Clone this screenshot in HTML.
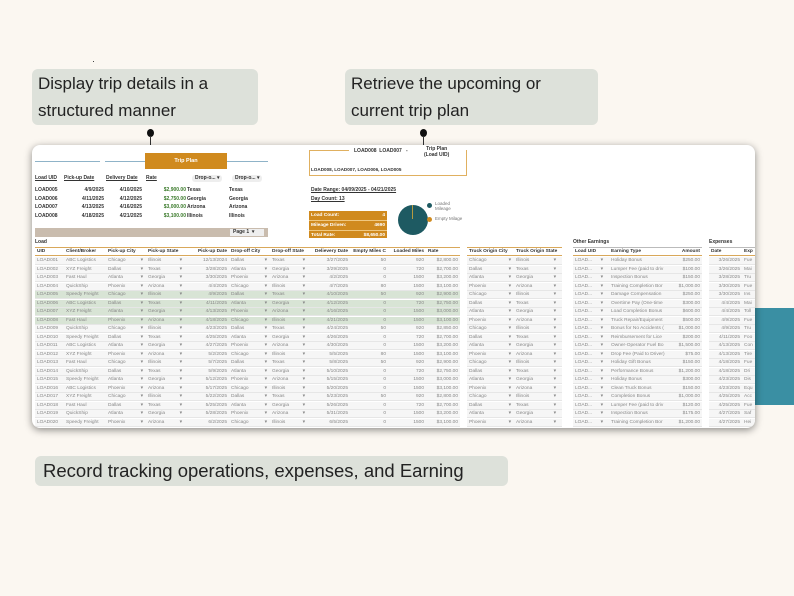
<!DOCTYPE html>
<html><head><meta charset="utf-8"><style>
*{margin:0;padding:0;box-sizing:border-box}
body{width:794px;height:596px;background:#fbf7f1;position:relative;overflow:hidden;font-family:"Liberation Sans",sans-serif}
.call{position:absolute;background:#dde1da;border-radius:6px;color:#222;font-size:17px;line-height:27px;padding:1px 6px;white-space:nowrap}
.dot{position:absolute;width:7px;height:8px;border-radius:50%;background:#111}
.vl{position:absolute;width:1px;background:#333}
.panel{position:absolute;left:32px;top:145px;width:723px;height:283px;background:#fff;border-radius:8px;box-shadow:0 2px 8px rgba(0,0,0,.45);overflow:hidden}
.teal{position:absolute;left:755px;top:308px;width:39px;height:97px;background:#3a8fa3}
.a{position:absolute;font-size:5px;color:#333;white-space:nowrap;line-height:7px}
.b{font-weight:bold}
.r{position:absolute;left:0;width:723px;height:8.45px;font-size:4.8px;color:#888;line-height:8px}
.r span{position:absolute;top:0;height:8px;overflow:hidden;white-space:nowrap;border-bottom:1px solid #e6e6e6;background:#f6f6f6;padding:0 2px}
.h span{color:#333;font-weight:bold;background:#fff;border-bottom:1px solid #d9a85a}
.g span{background:#d8e4d5}
.c1{left:3px;width:29px}.c2{left:32px;width:42px}.c3{left:74px;width:40px}.c4{left:114px;width:42px}
.c5{left:156px;width:41px;text-align:right}.c6{left:197px;width:41px}.c7{left:238px;width:41px}
.c8{left:279px;width:39px;text-align:right}.c9{left:318px;width:38px;text-align:right}.c10{left:356px;width:38px;text-align:right}.c11{left:394px;width:34px;text-align:right}
.c12{left:435px;width:47px}.c13{left:482px;width:48px}
.c14{left:541px;width:36px}.c15{left:577px;width:59px}.c16{left:636px;width:34px;text-align:right}
.c17{left:677px;width:33px;text-align:right}.c18{left:710px;width:13px}
.r:not(.h) .c3::after,.r:not(.h) .c6::after,.r:not(.h) .c12::after{content:"▾";position:absolute;right:3px}
.r:not(.h) .c4::after,.r:not(.h) .c7::after,.r:not(.h) .c13::after,.r:not(.h) .c14::after{content:"▾";position:absolute;right:6px}
</style></head><body>
<div style="position:absolute;left:93px;top:61px;width:1px;height:1px;background:#444"></div>
<div class="call" style="left:32px;top:69px;width:226px;height:56px">Display trip details in a<br>structured manner</div>
<div class="call" style="left:345px;top:69px;width:253px;height:56px">Retrieve the upcoming or<br>current trip plan</div>
<div class="dot" style="left:147px;top:129px"></div><div class="vl" style="left:150px;top:136px;height:12px"></div>
<div class="dot" style="left:420px;top:129px"></div><div class="vl" style="left:423px;top:136px;height:12px"></div>
<div class="teal"></div>
<div class="panel">
<div style="position:absolute;left:3px;top:16px;width:65px;height:1px;background:#8fb3c8"></div>
<div style="position:absolute;left:73px;top:16px;width:40px;height:1px;background:#8fb3c8"></div>
<div style="position:absolute;left:195px;top:16px;width:41px;height:1px;background:#8fb3c8"></div>
<div style="position:absolute;left:113px;top:8px;width:82px;height:16px;background:#d08a1e;color:#fff;font-size:5.5px;font-weight:bold;text-align:center;line-height:16px">Trip Plan</div>
<div class="a b" style="left:3px;top:30px;text-decoration:underline">Load UID</div>
<div class="a b" style="left:32px;top:30px;text-decoration:underline">Pick-up Date</div>
<div class="a b" style="left:74px;top:30px;text-decoration:underline">Delivery Date</div>
<div class="a b" style="left:114px;top:30px;text-decoration:underline">Rate</div>
<div class="a b" style="left:160px;top:30px;background:#eee;padding:0 3px;border-radius:3px">Drop-o... ▾</div>
<div class="a b" style="left:200px;top:30px;background:#eee;padding:0 3px;border-radius:3px">Drop-o... ▾</div>
<div class="a b" style="left:3px;top:42px">LOAD005</div><div class="a b" style="left:32px;top:42px;width:40px;text-align:right">4/9/2025</div><div class="a b" style="left:74px;top:42px;width:36px;text-align:right">4/10/2025</div><div class="a b" style="left:114px;top:42px;width:40px;text-align:right;color:#3a7a2a">$2,900.00</div><div class="a b" style="left:155px;top:42px">Texas</div><div class="a b" style="left:197px;top:42px">Texas</div>
<div class="a b" style="left:3px;top:51px">LOAD006</div><div class="a b" style="left:32px;top:51px;width:40px;text-align:right">4/11/2025</div><div class="a b" style="left:74px;top:51px;width:36px;text-align:right">4/12/2025</div><div class="a b" style="left:114px;top:51px;width:40px;text-align:right;color:#3a7a2a">$2,750.00</div><div class="a b" style="left:155px;top:51px">Georgia</div><div class="a b" style="left:197px;top:51px">Georgia</div>
<div class="a b" style="left:3px;top:59px">LOAD007</div><div class="a b" style="left:32px;top:59px;width:40px;text-align:right">4/13/2025</div><div class="a b" style="left:74px;top:59px;width:36px;text-align:right">4/16/2025</div><div class="a b" style="left:114px;top:59px;width:40px;text-align:right;color:#3a7a2a">$3,000.00</div><div class="a b" style="left:155px;top:59px">Arizona</div><div class="a b" style="left:197px;top:59px">Arizona</div>
<div class="a b" style="left:3px;top:68px">LOAD008</div><div class="a b" style="left:32px;top:68px;width:40px;text-align:right">4/18/2025</div><div class="a b" style="left:74px;top:68px;width:36px;text-align:right">4/21/2025</div><div class="a b" style="left:114px;top:68px;width:40px;text-align:right;color:#3a7a2a">$3,100.00</div><div class="a b" style="left:155px;top:68px">Illinois</div><div class="a b" style="left:197px;top:68px">Illinois</div>
<div style="position:absolute;left:3px;top:83px;width:233px;height:9px;background:#c9bcae"></div>
<div class="a b" style="left:198px;top:84px;background:#eee;width:34px;height:7px;padding-left:3px">Page 1 &nbsp;▾</div>
<div style="position:absolute;left:277px;top:5px;width:158px;height:26px;border:1px solid #e0b060;border-top:none"></div>
<div style="position:absolute;left:277px;top:5px;width:40px;height:1px;background:#e0b060"></div>
<div class="a b" style="left:322px;top:3px">LOAD008 &nbsp;LOAD007 &nbsp;&nbsp;-</div>
<div class="a b" style="left:392px;top:1px;text-align:center;line-height:6px;background:#fff">Trip Plan<br>(Load UID)</div>
<div class="a b" style="left:279px;top:21px;font-size:4.6px">LOAD008, LOAD007, LOAD006, LOAD005</div>
<div class="a b" style="left:279px;top:42px;text-decoration:underline">Date Range: 04/09/2025 - 04/21/2025</div>
<div class="a b" style="left:279px;top:51px;text-decoration:underline">Day Count: 13</div>
<div style="position:absolute;left:277px;top:66px;width:78px;height:27px;background:#d08a1e;color:#fff;font-size:4.8px;font-weight:bold;line-height:9px">
<div style="padding:0 2px;border-bottom:1px solid #f0c880;display:flex;justify-content:space-between"><span>Load Count:</span><span>4</span></div>
<div style="padding:0 2px;border-bottom:1px solid #f0c880;display:flex;justify-content:space-between"><span>Mileage Driven:</span><span>4690</span></div>
<div style="padding:0 2px;display:flex;justify-content:space-between"><span>Total Rate:</span><span>$8,650.00</span></div></div>
<div style="position:absolute;left:366px;top:60px;width:30px;height:30px;border-radius:50%;background:#1e5a62"></div>
<div style="position:absolute;left:380px;top:60px;width:1px;height:14px;background:#b59a40"></div>
<div style="position:absolute;left:395px;top:58px;width:5px;height:5px;border-radius:50%;background:#1e5a62"></div>
<div style="position:absolute;left:395px;top:72px;width:5px;height:5px;border-radius:50%;background:#d08a1e"></div>
<div class="a" style="left:403px;top:56px;font-size:4.5px;color:#777;line-height:5px">Loaded<br>Mileage</div>
<div class="a" style="left:403px;top:71px;font-size:4.5px;color:#777;line-height:5px">Empty Milage</div>
<div class="a b" style="left:3px;top:94px">Load</div>
<div style="position:absolute;left:3px;top:102px;width:425px;height:1px;background:#d9a85a"></div>
<div style="position:absolute;left:435px;top:102px;width:95px;height:1px;background:#d9a85a"></div>
<div class="a b" style="left:541px;top:94px">Other Earnings</div>
<div style="position:absolute;left:541px;top:102px;width:129px;height:1px;background:#bbb"></div>
<div class="a b" style="left:677px;top:94px">Expenses</div>
<div style="position:absolute;left:677px;top:102px;width:46px;height:1px;background:#bbb"></div>

<div class="r h" style="top:103px"><span class="c1">UID</span><span class="c2">Client/Broker</span><span class="c3">Pick-up City</span><span class="c4">Pick-up State</span><span class="c5">Pick-up Date</span><span class="c6">Drop-off City</span><span class="c7">Drop-off State</span><span class="c8">Delievery Date</span><span class="c9">Empty Miles C</span><span class="c10">Loaded Miles</span><span class="c11" style="text-align:left">Rate</span><span class="c12">Truck Origin City</span><span class="c13">Truck Origin State</span><span class="c14">Load UID</span><span class="c15">Earning Type</span><span class="c16">Amount</span><span class="c17" style="text-align:left">Date</span><span class="c18">Exp</span></div>
<div class="r" style="top:112px"><span class="c1">LOAD001</span><span class="c2">ABC Logistics</span><span class="c3">Chicago</span><span class="c4">Illinois</span><span class="c5">12/13/2024</span><span class="c6">Dallas</span><span class="c7">Texas</span><span class="c8">3/27/2025</span><span class="c9">50</span><span class="c10">920</span><span class="c11">$2,800.00</span><span class="c12">Chicago</span><span class="c13">Illinois</span><span class="c14">LOAD...</span><span class="c15">Holiday Bonus</span><span class="c16">$250.00</span><span class="c17">3/26/2025</span><span class="c18">Fue</span></div>
<div class="r" style="top:120.5px"><span class="c1">LOAD002</span><span class="c2">XYZ Freight</span><span class="c3">Dallas</span><span class="c4">Texas</span><span class="c5">3/28/2025</span><span class="c6">Atlanta</span><span class="c7">Georgia</span><span class="c8">3/29/2025</span><span class="c9">0</span><span class="c10">720</span><span class="c11">$2,700.00</span><span class="c12">Dallas</span><span class="c13">Texas</span><span class="c14">LOAD...</span><span class="c15">Lumper Fee (paid to driv</span><span class="c16">$100.00</span><span class="c17">3/26/2025</span><span class="c18">Mai</span></div>
<div class="r" style="top:129px"><span class="c1">LOAD003</span><span class="c2">Fast Haul</span><span class="c3">Atlanta</span><span class="c4">Georgia</span><span class="c5">3/30/2025</span><span class="c6">Phoenix</span><span class="c7">Arizona</span><span class="c8">4/2/2025</span><span class="c9">0</span><span class="c10">1500</span><span class="c11">$3,200.00</span><span class="c12">Atlanta</span><span class="c13">Georgia</span><span class="c14">LOAD...</span><span class="c15">Inspection Bonus</span><span class="c16">$150.00</span><span class="c17">3/28/2025</span><span class="c18">Tru</span></div>
<div class="r" style="top:137.5px"><span class="c1">LOAD004</span><span class="c2">QuickShip</span><span class="c3">Phoenix</span><span class="c4">Arizona</span><span class="c5">4/4/2025</span><span class="c6">Chicago</span><span class="c7">Illinois</span><span class="c8">4/7/2025</span><span class="c9">80</span><span class="c10">1500</span><span class="c11">$3,100.00</span><span class="c12">Phoenix</span><span class="c13">Arizona</span><span class="c14">LOAD...</span><span class="c15">Training Completion Bor</span><span class="c16">$1,000.00</span><span class="c17">3/30/2025</span><span class="c18">Fue</span></div>
<div class="r g" style="top:146px"><span class="c1">LOAD005</span><span class="c2">Speedy Freight</span><span class="c3">Chicago</span><span class="c4">Illinois</span><span class="c5">4/9/2025</span><span class="c6">Dallas</span><span class="c7">Texas</span><span class="c8">4/10/2025</span><span class="c9">50</span><span class="c10">920</span><span class="c11">$2,900.00</span><span class="c12" style="background:#f6f6f6">Chicago</span><span class="c13" style="background:#f6f6f6">Illinois</span><span class="c14" style="background:#f6f6f6">LOAD...</span><span class="c15" style="background:#f6f6f6">Damage Compensation</span><span class="c16" style="background:#f6f6f6">$250.00</span><span class="c17" style="background:#f6f6f6">3/30/2025</span><span class="c18" style="background:#f6f6f6">Ins</span></div>
<div class="r g" style="top:154.5px"><span class="c1">LOAD006</span><span class="c2">ABC Logistics</span><span class="c3">Dallas</span><span class="c4">Texas</span><span class="c5">4/11/2025</span><span class="c6">Atlanta</span><span class="c7">Georgia</span><span class="c8">4/12/2025</span><span class="c9">0</span><span class="c10">720</span><span class="c11">$2,750.00</span><span class="c12" style="background:#f6f6f6">Dallas</span><span class="c13" style="background:#f6f6f6">Texas</span><span class="c14" style="background:#f6f6f6">LOAD...</span><span class="c15" style="background:#f6f6f6">Overtime Pay (One-time</span><span class="c16" style="background:#f6f6f6">$300.00</span><span class="c17" style="background:#f6f6f6">4/4/2025</span><span class="c18" style="background:#f6f6f6">Mai</span></div>
<div class="r g" style="top:163px"><span class="c1">LOAD007</span><span class="c2">XYZ Freight</span><span class="c3">Atlanta</span><span class="c4">Georgia</span><span class="c5">4/13/2025</span><span class="c6">Phoenix</span><span class="c7">Arizona</span><span class="c8">4/16/2025</span><span class="c9">0</span><span class="c10">1500</span><span class="c11">$3,000.00</span><span class="c12" style="background:#f6f6f6">Atlanta</span><span class="c13" style="background:#f6f6f6">Georgia</span><span class="c14" style="background:#f6f6f6">LOAD...</span><span class="c15" style="background:#f6f6f6">Load Completion Bonus</span><span class="c16" style="background:#f6f6f6">$600.00</span><span class="c17" style="background:#f6f6f6">4/4/2025</span><span class="c18" style="background:#f6f6f6">Toll</span></div>
<div class="r g" style="top:171.5px"><span class="c1">LOAD008</span><span class="c2">Fast Haul</span><span class="c3">Phoenix</span><span class="c4">Arizona</span><span class="c5">4/18/2025</span><span class="c6">Chicago</span><span class="c7">Illinois</span><span class="c8">4/21/2025</span><span class="c9">0</span><span class="c10">1500</span><span class="c11">$3,100.00</span><span class="c12" style="background:#f6f6f6">Phoenix</span><span class="c13" style="background:#f6f6f6">Arizona</span><span class="c14" style="background:#f6f6f6">LOAD...</span><span class="c15" style="background:#f6f6f6">Truck Repair/Equipment</span><span class="c16" style="background:#f6f6f6">$500.00</span><span class="c17" style="background:#f6f6f6">4/9/2025</span><span class="c18" style="background:#f6f6f6">Fue</span></div>
<div class="r" style="top:180px"><span class="c1">LOAD009</span><span class="c2">QuickShip</span><span class="c3">Chicago</span><span class="c4">Illinois</span><span class="c5">4/23/2025</span><span class="c6">Dallas</span><span class="c7">Texas</span><span class="c8">4/24/2025</span><span class="c9">50</span><span class="c10">920</span><span class="c11">$2,850.00</span><span class="c12">Chicago</span><span class="c13">Illinois</span><span class="c14">LOAD...</span><span class="c15">Bonus for No Accidents (</span><span class="c16">$1,000.00</span><span class="c17">4/9/2025</span><span class="c18">Tru</span></div>
<div class="r" style="top:188.5px"><span class="c1">LOAD010</span><span class="c2">Speedy Freight</span><span class="c3">Dallas</span><span class="c4">Texas</span><span class="c5">4/25/2025</span><span class="c6">Atlanta</span><span class="c7">Georgia</span><span class="c8">4/26/2025</span><span class="c9">0</span><span class="c10">720</span><span class="c11">$2,700.00</span><span class="c12">Dallas</span><span class="c13">Texas</span><span class="c14">LOAD...</span><span class="c15">Reimbursement for Lice</span><span class="c16">$200.00</span><span class="c17">4/11/2025</span><span class="c18">Foo</span></div>
<div class="r" style="top:197px"><span class="c1">LOAD011</span><span class="c2">ABC Logistics</span><span class="c3">Atlanta</span><span class="c4">Georgia</span><span class="c5">4/27/2025</span><span class="c6">Phoenix</span><span class="c7">Arizona</span><span class="c8">4/30/2025</span><span class="c9">0</span><span class="c10">1500</span><span class="c11">$3,200.00</span><span class="c12">Atlanta</span><span class="c13">Georgia</span><span class="c14">LOAD...</span><span class="c15">Owner-Operator Fuel Bo</span><span class="c16">$1,500.00</span><span class="c17">4/13/2025</span><span class="c18">Con</span></div>
<div class="r" style="top:205.5px"><span class="c1">LOAD012</span><span class="c2">XYZ Freight</span><span class="c3">Phoenix</span><span class="c4">Arizona</span><span class="c5">5/2/2025</span><span class="c6">Chicago</span><span class="c7">Illinois</span><span class="c8">5/5/2025</span><span class="c9">80</span><span class="c10">1500</span><span class="c11">$3,100.00</span><span class="c12">Phoenix</span><span class="c13">Arizona</span><span class="c14">LOAD...</span><span class="c15">Drop Fee (Paid to Driver)</span><span class="c16">$75.00</span><span class="c17">4/13/2025</span><span class="c18">Tire</span></div>
<div class="r" style="top:214px"><span class="c1">LOAD013</span><span class="c2">Fast Haul</span><span class="c3">Chicago</span><span class="c4">Illinois</span><span class="c5">5/7/2025</span><span class="c6">Dallas</span><span class="c7">Texas</span><span class="c8">5/8/2025</span><span class="c9">50</span><span class="c10">920</span><span class="c11">$2,900.00</span><span class="c12">Chicago</span><span class="c13">Illinois</span><span class="c14">LOAD...</span><span class="c15">Holiday Gift Bonus</span><span class="c16">$150.00</span><span class="c17">4/18/2025</span><span class="c18">Fue</span></div>
<div class="r" style="top:222.5px"><span class="c1">LOAD014</span><span class="c2">QuickShip</span><span class="c3">Dallas</span><span class="c4">Texas</span><span class="c5">5/9/2025</span><span class="c6">Atlanta</span><span class="c7">Georgia</span><span class="c8">5/10/2025</span><span class="c9">0</span><span class="c10">720</span><span class="c11">$2,750.00</span><span class="c12">Dallas</span><span class="c13">Texas</span><span class="c14">LOAD...</span><span class="c15">Performance Bonus</span><span class="c16">$1,200.00</span><span class="c17">4/18/2025</span><span class="c18">Dri</span></div>
<div class="r" style="top:231px"><span class="c1">LOAD015</span><span class="c2">Speedy Freight</span><span class="c3">Atlanta</span><span class="c4">Georgia</span><span class="c5">5/12/2025</span><span class="c6">Phoenix</span><span class="c7">Arizona</span><span class="c8">5/15/2025</span><span class="c9">0</span><span class="c10">1500</span><span class="c11">$3,000.00</span><span class="c12">Atlanta</span><span class="c13">Georgia</span><span class="c14">LOAD...</span><span class="c15">Holiday Bonus</span><span class="c16">$300.00</span><span class="c17">4/23/2025</span><span class="c18">Dis</span></div>
<div class="r" style="top:239.5px"><span class="c1">LOAD016</span><span class="c2">ABC Logistics</span><span class="c3">Phoenix</span><span class="c4">Arizona</span><span class="c5">5/17/2025</span><span class="c6">Chicago</span><span class="c7">Illinois</span><span class="c8">5/20/2025</span><span class="c9">0</span><span class="c10">1500</span><span class="c11">$3,100.00</span><span class="c12">Phoenix</span><span class="c13">Arizona</span><span class="c14">LOAD...</span><span class="c15">Clean Truck Bonus</span><span class="c16">$150.00</span><span class="c17">4/23/2025</span><span class="c18">Equ</span></div>
<div class="r" style="top:248px"><span class="c1">LOAD017</span><span class="c2">XYZ Freight</span><span class="c3">Chicago</span><span class="c4">Illinois</span><span class="c5">5/22/2025</span><span class="c6">Dallas</span><span class="c7">Texas</span><span class="c8">5/23/2025</span><span class="c9">50</span><span class="c10">920</span><span class="c11">$2,800.00</span><span class="c12">Chicago</span><span class="c13">Illinois</span><span class="c14">LOAD...</span><span class="c15">Completion Bonus</span><span class="c16">$1,000.00</span><span class="c17">4/25/2025</span><span class="c18">Acc</span></div>
<div class="r" style="top:256.5px"><span class="c1">LOAD018</span><span class="c2">Fast Haul</span><span class="c3">Dallas</span><span class="c4">Texas</span><span class="c5">5/25/2025</span><span class="c6">Atlanta</span><span class="c7">Georgia</span><span class="c8">5/26/2025</span><span class="c9">0</span><span class="c10">720</span><span class="c11">$2,700.00</span><span class="c12">Dallas</span><span class="c13">Texas</span><span class="c14">LOAD...</span><span class="c15">Lumper Fee (paid to driv</span><span class="c16">$120.00</span><span class="c17">4/25/2025</span><span class="c18">Fue</span></div>
<div class="r" style="top:265px"><span class="c1">LOAD019</span><span class="c2">QuickShip</span><span class="c3">Atlanta</span><span class="c4">Georgia</span><span class="c5">5/28/2025</span><span class="c6">Phoenix</span><span class="c7">Arizona</span><span class="c8">5/31/2025</span><span class="c9">0</span><span class="c10">1500</span><span class="c11">$3,200.00</span><span class="c12">Atlanta</span><span class="c13">Georgia</span><span class="c14">LOAD...</span><span class="c15">Inspection Bonus</span><span class="c16">$175.00</span><span class="c17">4/27/2025</span><span class="c18">Saf</span></div>
<div class="r" style="top:273.5px"><span class="c1">LOAD020</span><span class="c2">Speedy Freight</span><span class="c3">Phoenix</span><span class="c4">Arizona</span><span class="c5">6/2/2025</span><span class="c6">Chicago</span><span class="c7">Illinois</span><span class="c8">6/5/2025</span><span class="c9">0</span><span class="c10">1500</span><span class="c11">$3,100.00</span><span class="c12">Phoenix</span><span class="c13">Arizona</span><span class="c14">LOAD...</span><span class="c15">Training Completion Bor</span><span class="c16">$1,200.00</span><span class="c17">4/27/2025</span><span class="c18">Hei</span></div>
</div>
<div class="call" style="left:35px;top:456px;width:473px;height:30px;font-size:18.5px;line-height:30px;padding:0 0 0 8px">Record tracking operations, expenses, and Earning</div>
</body></html>
